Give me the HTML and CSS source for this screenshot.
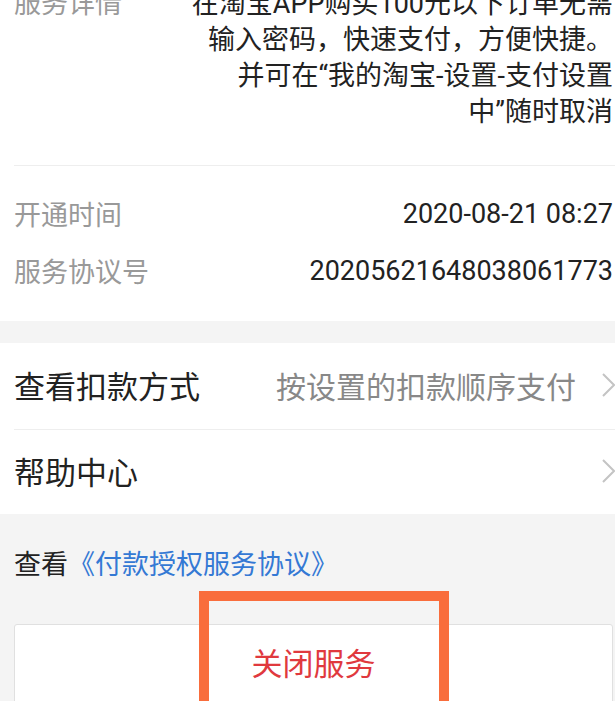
FILE: index.html
```html
<!DOCTYPE html>
<html lang="zh-CN">
<head>
<meta charset="UTF-8">
<meta name="viewport" content="width=device-width, initial-scale=1.0">
<title>服务详情</title>
<link rel="stylesheet" href="styles.css">
</head>
<body>
  <div class="page">
    <!-- Service info -->
    <section class="panel detail">
      <div class="desc">
        <span class="desc-label">服务详情</span>
        <p class="desc-text">在淘宝APP购买100元以下订单无需<br>输入密码，快速支付，方便快捷。<br>并可在“我的淘宝-设置-支付设置<br>中”随时取消</p>
      </div>
      <div class="info">
        <div class="info-row">
          <span class="info-label">开通时间</span>
          <span class="info-value">2020-08-21 08:27</span>
        </div>
        <div class="info-row">
          <span class="info-label">服务协议号</span>
          <span class="info-value">20205621648038061773</span>
        </div>
      </div>
    </section>

    <!-- Menu -->
    <section class="panel menu">
      <div class="menu-row">
        <span class="menu-title">查看扣款方式</span>
        <span class="menu-extra">按设置的扣款顺序支付</span>
        <svg class="chevron" viewBox="0 0 13 24"><polyline points="1,1 12,12 1,23"/></svg>
      </div>
      <div class="menu-row">
        <span class="menu-title">帮助中心</span>
        <span class="menu-extra"></span>
        <svg class="chevron" viewBox="0 0 13 24"><polyline points="1,1 12,12 1,23"/></svg>
      </div>
    </section>

    <p class="agreement">查看<a href="#" class="agreement-link">《付款授权服务协议》</a></p>

    <div class="close-card">
      <button class="close-btn">关闭服务</button>
    </div>
  </div>

  <!-- annotation frame -->
  <div class="highlight"></div>
</body>
</html>
```

FILE: styles.css
```css
html, body {
  height: 100%;
}

body {
  margin: 0;
  background: #f4f4f4;
  font-family: Roboto, "Noto Sans CJK SC", sans-serif;
  color: #222;
  overflow: hidden;
  position: relative;
}

.page {
  margin-top: -14px;
}

.panel {
  background: #fff;
}

/* Service info */
.detail {
  padding-left: 14px;
}

.desc {
  display: flex;
  justify-content: space-between;
  font-size: 27px;
  line-height: 36px;
  padding-right: 2px;
}

.desc-label {
  color: #999;
  flex-shrink: 0;
}

.desc-text {
  margin: 0;
  text-align: right;
  color: #222;
}

.info {
  margin-top: 35px;
  border-top: 1px solid #eeeeee;
  padding: 19px 2px 22px 0;
}

.info-row {
  display: flex;
  justify-content: space-between;
  align-items: center;
  height: 57px;
  font-size: 27px;
}

.info-label {
  color: #999;
}

.info-value {
  color: #222;
}

/* Menu */
.menu {
  margin-top: 22px;
  padding-left: 14px;
}

.menu-row {
  display: flex;
  align-items: center;
  height: 86px;
  padding-bottom: 3px;
  box-sizing: border-box;
}

.menu-row + .menu-row {
  border-top: 1px solid #eeeeee;
  height: 85px;
}

.menu-title {
  font-size: 31px;
  color: #222;
}

.menu-extra {
  flex: 1;
  text-align: right;
  font-size: 30px;
  color: #888;
  margin-right: 26px;
}

.chevron {
  width: 13px;
  height: 24px;
  fill: none;
  stroke: #c4c4c4;
  stroke-width: 2;
}

/* Agreement */
.agreement {
  margin: 0;
  padding: 31px 0 0 14px;
  font-size: 27px;
  line-height: 40px;
  color: #222;
}

.agreement-link {
  color: #3479d4;
  text-decoration: none;
}

.close-card {
  margin: 39px 2px 0 14px;
  background: #fff;
  border: 1px solid #e0e0e0;
  border-radius: 3px;
  padding: 20px 0 40px;
  text-align: center;
}

.close-btn {
  border: none;
  background: none;
  padding: 0;
  font-family: inherit;
  font-size: 31px;
  line-height: 40px;
  color: #e0393e;
}

.highlight {
  position: absolute;
  left: 199px;
  top: 591px;
  width: 230px;
  height: 140px;
  border: 10px solid #f96d3c;
}
```
